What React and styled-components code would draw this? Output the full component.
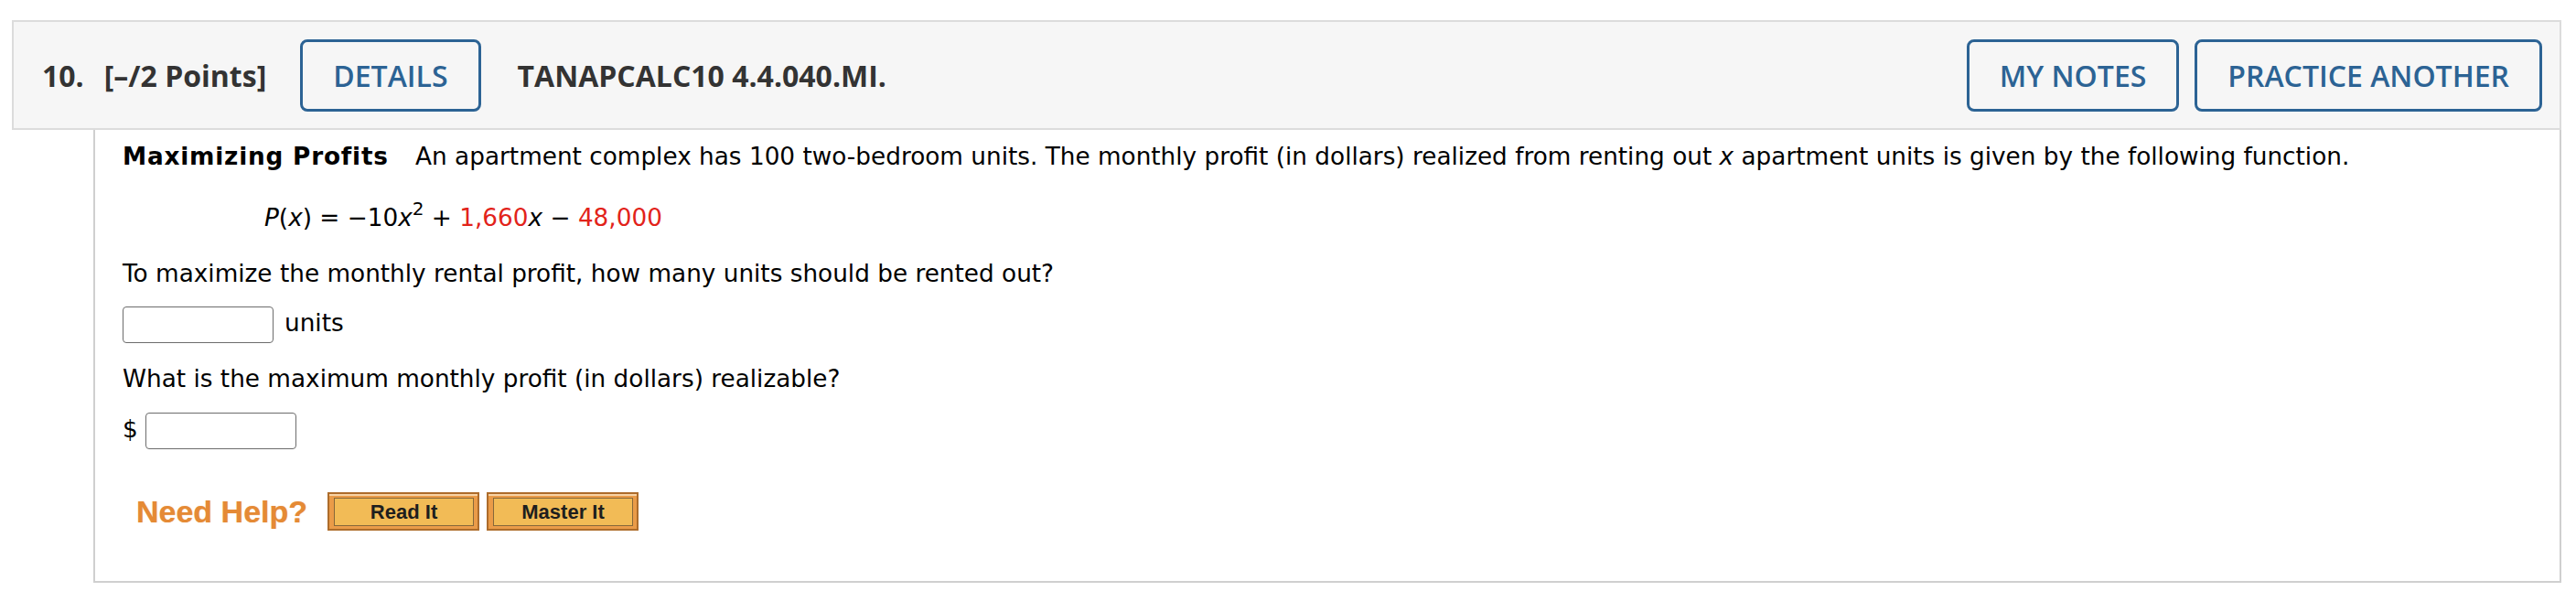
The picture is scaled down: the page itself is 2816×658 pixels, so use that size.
import React from 'react';
import styled, { createGlobalStyle } from 'styled-components';

const GlobalStyle = createGlobalStyle`
  body {
    margin: 0;
    background: #ffffff;
  }
`;

const Page = styled.div`
  padding: 22px 16px 0 13px;
`;

const QuestionHeader = styled.div`
  display: flex;
  align-items: center;
  height: 120px;
  box-sizing: border-box;
  border: 2px solid #dcdcdc;
  background-color: #f6f6f6;
  padding: 0 19px 0 31px;
  font-family: "Open Sans", sans-serif;
  color: #333333;
`;

const HeaderLabel = styled.span`
  font-size: 32px;
  font-weight: 700;
  margin-right: ${p => p.gap || 0}px;
  white-space: nowrap;
`;

const Spacer = styled.div`
  flex: 1;
`;

const OutlineButton = styled.button`
  height: 79px;
  box-sizing: border-box;
  border: 3px solid #2c6394;
  border-radius: 8px;
  background: transparent;
  color: #2c6394;
  font-family: "Open Sans", sans-serif;
  font-size: 32px;
  font-weight: 600;
  padding: 0 33px;
  margin-right: ${p => p.gap || 0}px;
  cursor: pointer;
`;

const QuestionBody = styled.div`
  margin-left: 89px;
  border: 2px solid #cfcfcf;
  border-top: none;
  padding: 0 30px;
  height: 495px;
  box-sizing: border-box;
  font-family: "DejaVu Sans", Verdana, sans-serif;
  font-size: 26.3px;
  color: #000000;
`;

const Para = styled.div`
  height: ${p => p.h}px;
  line-height: ${p => p.h}px;
  padding-left: ${p => p.indent || 0}px;
  white-space: nowrap;
`;

const Lead = styled.b`
  font-weight: 700;
  letter-spacing: 0.8px;
  margin-right: 21px;
`;

const Var = styled.i`
  font-style: italic;
`;

const Red = styled.span`
  color: #e2231a;
`;

const Sup = styled.sup`
  font-size: 20px;
  line-height: 0;
  vertical-align: 12px;
`;

const Answer = styled.span`
  display: inline-block;
  vertical-align: middle;
  width: 165px;
  height: 40px;
  box-sizing: border-box;
  border: 1.5px solid #6c6c6c;
  border-radius: 4px;
  background: #ffffff;
  margin-right: 12px;
`;

const Prefix = styled.span`
  margin-right: 8px;
`;

const HelpRow = styled.div`
  display: flex;
  align-items: center;
  height: 42px;
  margin-top: 44px;
  padding-left: 15px;
`;

const NeedHelp = styled.span`
  font-family: "Liberation Sans", Arial, sans-serif;
  font-weight: 700;
  font-size: 34px;
  color: #e58a35;
  text-shadow: 0 0 1px rgba(229, 138, 53, 0.6);
  margin-right: 22px;
`;

const HelpButton = styled.span`
  display: inline-flex;
  width: 166px;
  height: 42px;
  box-sizing: border-box;
  border: 2px solid #ad6c2b;
  background: #ea9b48;
  box-shadow: inset 0 2px 0 #f7d3a6;
  padding: 4px 4px 3px 5px;
  margin-right: 8px;
`;

const HelpInner = styled.span`
  flex: 1;
  display: flex;
  align-items: center;
  justify-content: center;
  background: #f2bb56;
  border: 1.5px solid #86683a;
  font-family: "Liberation Sans", Arial, sans-serif;
  font-weight: 700;
  font-size: 22px;
  color: #1e1e1e;
`;

export default function App() {
  return (
    <Page>
      <GlobalStyle />
      <QuestionHeader>
        <HeaderLabel gap={22}>10.</HeaderLabel>
        <HeaderLabel gap={37}>[–/2 Points]</HeaderLabel>
        <OutlineButton gap={40}>DETAILS</OutlineButton>
        <HeaderLabel>TANAPCALC10 4.4.040.MI.</HeaderLabel>
        <Spacer />
        <OutlineButton gap={17}>MY NOTES</OutlineButton>
        <OutlineButton>PRACTICE ANOTHER</OutlineButton>
      </QuestionHeader>
      <QuestionBody>
        <Para h={58}>
          <Lead>Maximizing Profits</Lead>
          {' '}An apartment complex has 100 two-bedroom units. The monthly profit (in dollars) realized from renting out <Var>x</Var> apartment units is given by the following function.
        </Para>
        <Para h={76} indent={155}>
          <Var>P</Var>(<Var>x</Var>) = −10<Var>x</Var><Sup>2</Sup> + <Red>1,660</Red><Var>x</Var> − <Red>48,000</Red>
        </Para>
        <Para h={46}>To maximize the monthly rental profit, how many units should be rented out?</Para>
        <Para h={62}>
          <Answer />units
        </Para>
        <Para h={60}>What is the maximum monthly profit (in dollars) realizable?</Para>
        <Para h={50}>
          <Prefix>$</Prefix><Answer />
        </Para>
        <HelpRow>
          <NeedHelp>Need Help?</NeedHelp>
          <HelpButton><HelpInner>Read It</HelpInner></HelpButton>
          <HelpButton><HelpInner>Master It</HelpInner></HelpButton>
        </HelpRow>
      </QuestionBody>
    </Page>
  );
}
